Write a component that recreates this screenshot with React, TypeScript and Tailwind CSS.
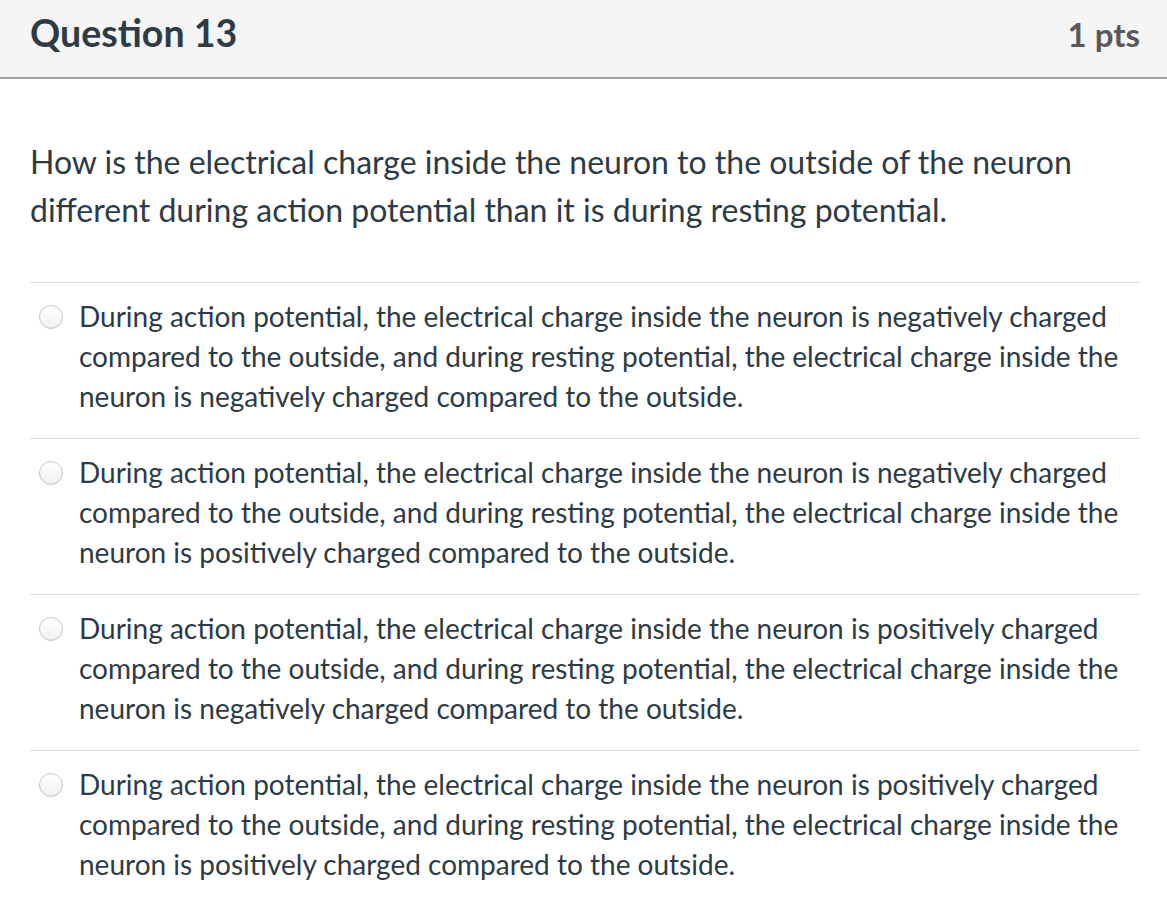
const answers = [
  'During action potential, the electrical charge inside the neuron is negatively charged compared to the outside, and during resting potential, the electrical charge inside the neuron is negatively charged compared to the outside.',
  'During action potential, the electrical charge inside the neuron is negatively charged compared to the outside, and during resting potential, the electrical charge inside the neuron is positively charged compared to the outside.',
  'During action potential, the electrical charge inside the neuron is positively charged compared to the outside, and during resting potential, the electrical charge inside the neuron is negatively charged compared to the outside.',
  'During action potential, the electrical charge inside the neuron is positively charged compared to the outside, and during resting potential, the electrical charge inside the neuron is positively charged compared to the outside.',
]

function Radio() {
  return (
    <span className="mt-[9px] block h-[24px] w-[24px] shrink-0 rounded-full border border-[#c4c9cc] bg-gradient-to-b from-white to-[#f1f1f1] shadow-[inset_0_-1px_1px_rgba(0,0,0,0.06)]" />
  )
}

export default function App() {
  return (
    <div className="min-h-screen bg-white text-[#2d3b45]" style={{ fontFamily: 'Lato, "Open Sans", sans-serif' }}>
      {/* Header */}
      <div className="flex h-[79px] items-baseline justify-between border-b-2 border-[#a5a5a5] bg-[#f5f5f5] px-[30px] pt-[14px]">
        <h2 className="text-[37.5px] font-bold leading-none">Question 13</h2>
        <span className="mr-[-3px] text-[33px] font-bold leading-none text-[#595959]">1 pts</span>
      </div>

      {/* Question */}
      <div className="pl-[30px] pr-[27px] pt-[59px]">
        <p className="text-[32px] leading-[48px]">
          How is the electrical charge inside the neuron to the outside of the neuron different during action potential than it is during resting potential.
        </p>

        <div className="mt-[48px]">
          {answers.map((a, i) => (
            <div key={i} className="flex gap-[16px] border-t border-[#dcdcdc] pb-[22px] pl-[9px] pr-[10px] pt-[13px]">
              <Radio />
              <p className="text-[28px] leading-[40px]">{a}</p>
            </div>
          ))}
        </div>
      </div>
    </div>
  )
}
